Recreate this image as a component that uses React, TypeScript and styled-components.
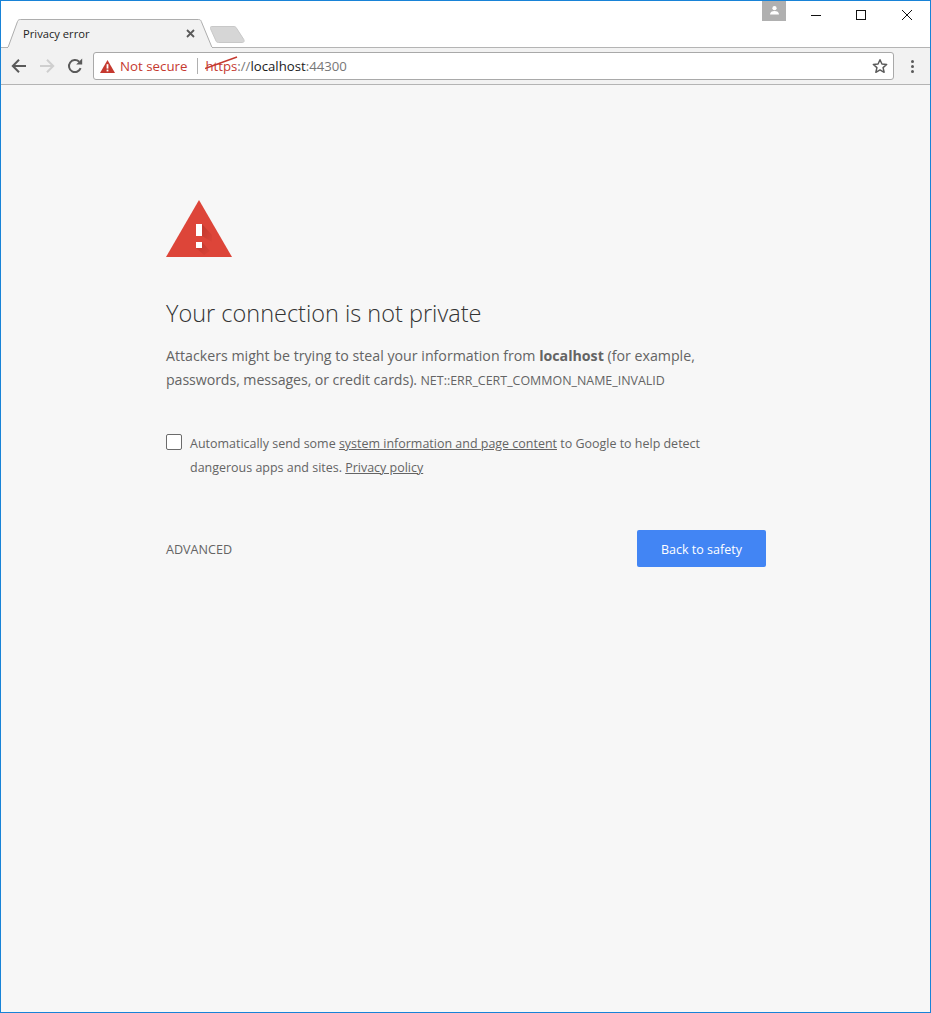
import styled, { createGlobalStyle } from "styled-components";

const GlobalStyle = createGlobalStyle`
  html, body {
    margin: 0;
    padding: 0;
    background: #ffffff;
    font-family: "Open Sans", "Noto Sans", sans-serif;
  }
  * {
    box-sizing: border-box;
  }
`;

const App = () => {
  return (
    <Browser>
      <GlobalStyle />
      <TitleBar>
        <Tab>
          <TabShape viewBox="0 0 206 29" width="206" height="29">
            <path d="M0 28.5 L1 28.5 L10.5 2.5 C11 1 12 0.5 13.5 0.5 L191.5 0.5 C193 0.5 193.8 1 194.3 2.5 L205 28.5 L206 28.5 L206 29 L0 29 Z" fill="#f2f2f2" stroke="#adadad" strokeWidth="1" />
            <rect x="1" y="28" width="204" height="1" fill="#f2f2f2" />
          </TabShape>
          <TabTitle>Privacy error</TabTitle>
          <TabClose width="9" height="9" viewBox="0 0 9 9">
            <path d="M1 1 L8 8 M8 1 L1 8" stroke="#5a5a5a" strokeWidth="1.8" fill="none" />
          </TabClose>
        </Tab>
        <NewTab width="35" height="17" viewBox="0 0 35 17">
          <path d="M1.5 0.5 L24 0.5 C25.2 0.5 25.8 1 26.4 2 L33.8 13.5 C34.6 15 34 16.5 32.4 16.5 L8.5 16.5 C7.2 16.5 6.5 16 6 15 L0.4 2.5 C0 1.4 0.4 0.5 1.5 0.5 Z" fill="#d6d6d6" stroke="#c8c8c8" strokeWidth="1" />
        </NewTab>
        <WindowControls>
          <Avatar>
            <svg width="9" height="9" viewBox="0 0 9 9">
              <circle cx="4.5" cy="2.2" r="2.1" fill="#ffffff" />
              <path d="M0 8.5 C0 6 2 5 4.5 5 C7 5 9 6 9 8.5 Z" fill="#ffffff" />
            </svg>
          </Avatar>
          <ControlButton>
            <svg width="10" height="10" viewBox="0 0 10 10">
              <path d="M0 5.5 H10" stroke="#111111" strokeWidth="1" />
            </svg>
          </ControlButton>
          <ControlButton>
            <svg width="10" height="10" viewBox="0 0 10 10">
              <rect x="0.5" y="0.5" width="9" height="9" fill="none" stroke="#111111" strokeWidth="1" />
            </svg>
          </ControlButton>
          <ControlButton>
            <svg width="10" height="10" viewBox="0 0 10 10">
              <path d="M0 0 L10 10 M10 0 L0 10" stroke="#111111" strokeWidth="1" />
            </svg>
          </ControlButton>
        </WindowControls>
      </TitleBar>
      <Toolbar>
        <NavIcon width="16" height="16" viewBox="0 0 16 16">
          <path d="M15 8 H2 M8 1.8 L1.8 8 L8 14.2" stroke="#5a5a5a" strokeWidth="2" fill="none" />
        </NavIcon>
        <NavIcon width="16" height="16" viewBox="0 0 16 16">
          <path d="M1 8 H14 M8 1.8 L14.2 8 L8 14.2" stroke="#cfcfcf" strokeWidth="2" fill="none" />
        </NavIcon>
        <NavIcon width="16" height="16" viewBox="0 0 16 16">
          <path d="M13.6 10.2 A6 6 0 1 1 12.2 3.8" stroke="#5a5a5a" strokeWidth="2" fill="none" />
          <path d="M9.2 6.6 L15.2 6.6 L15.2 0.6 Z" fill="#5a5a5a" />
        </NavIcon>
        <Omnibox>
          <svg width="15" height="13" viewBox="0 0 15 13">
            <path d="M7.5 0 L15 13 L0 13 Z" fill="#c5392f" />
            <rect x="6.6" y="4.2" width="1.8" height="4.4" fill="#ffffff" />
            <rect x="6.6" y="9.6" width="1.8" height="1.8" fill="#ffffff" />
          </svg>
          <SecurityLabel>Not secure</SecurityLabel>
          <Divider />
          <UrlText>
            <Scheme>
              https
              <StrikeLine width="34" height="16" viewBox="0 0 34 16">
                <path d="M0 13.5 L32 2" stroke="#c5392f" strokeWidth="1.5" fill="none" />
              </StrikeLine>
            </Scheme>
            <Muted>://</Muted>
            localhost
            <Muted>:44300</Muted>
          </UrlText>
          <Star width="16" height="16" viewBox="0 0 24 24">
            <path d="M12 2.6 L14.9 9.1 L22 9.8 L16.6 14.5 L18.2 21.4 L12 17.8 L5.8 21.4 L7.4 14.5 L2 9.8 L9.1 9.1 Z" fill="none" stroke="#5a5a5a" strokeWidth="2.2" strokeLinejoin="round" />
          </Star>
        </Omnibox>
        <MenuDots>
          <Dot />
          <Dot />
          <Dot />
        </MenuDots>
      </Toolbar>
      <Content>
        <Interstitial>
          <WarningIcon width="66" height="57" viewBox="0 0 66 57">
            <defs>
              <linearGradient id="fold" x1="0" y1="0" x2="1" y2="1">
                <stop offset="0" stopColor="#a32a22" stopOpacity="0.5" />
                <stop offset="1" stopColor="#a32a22" stopOpacity="0.05" />
              </linearGradient>
            </defs>
            <path d="M33 0 L66 57 L0 57 Z" fill="#dd4539" />
            <path d="M36 24 L46 35 L46 42 L36 36 Z" fill="url(#fold)" />
            <path d="M36 42 L44 51 L38 55 L30 48 Z" fill="url(#fold)" />
            <rect x="30" y="24" width="6" height="12" fill="#ffffff" />
            <rect x="30" y="42" width="6" height="6" fill="#ffffff" />
          </WarningIcon>
          <Heading>Your connection is not private</Heading>
          <Message>
            Attackers might be trying to steal your information from <strong>localhost</strong> (for example,{" "}
            <Tight>passwords, messages, or credit cards). </Tight>
            <ErrorCode>NET::ERR_CERT_COMMON_NAME_INVALID</ErrorCode>
          </Message>
          <OptIn>
            <Checkbox />
            <OptInText>
              Automatically send some <Link>system information and page content</Link> to Google to help detect
              dangerous apps and sites. <Link>Privacy policy</Link>
            </OptInText>
          </OptIn>
          <Actions>
            <AdvancedButton>ADVANCED</AdvancedButton>
            <PrimaryButton>Back to safety</PrimaryButton>
          </Actions>
        </Interstitial>
      </Content>
    </Browser>
  );
};

export default App;

const Browser = styled.div`
  width: 931px;
  height: 1013px;
  border: 1px solid #1883d7;
  display: flex;
  flex-direction: column;
  overflow: hidden;
  background: #f7f7f7;
`;

const TitleBar = styled.header`
  height: 46px;
  flex: none;
  background: #ffffff;
  display: flex;
  align-items: flex-end;
  padding-left: 6px;
`;

const Tab = styled.div`
  position: relative;
  width: 206px;
  height: 29px;
  display: flex;
  align-items: center;
  justify-content: space-between;
  padding: 0 18px 0 16px;
  z-index: 1;
  margin-bottom: -1px;
`;

const TabShape = styled.svg`
  position: absolute;
  left: 0;
  top: 0;
`;

const TabTitle = styled.span`
  position: relative;
  font-size: 11.2px;
  color: #222222;
`;

const TabClose = styled.svg`
  position: relative;
`;

const NewTab = styled.svg`
  margin-left: -3px;
  margin-bottom: 4px;
`;

const WindowControls = styled.div`
  margin-left: auto;
  align-self: flex-start;
  display: flex;
`;

const Avatar = styled.div`
  width: 24px;
  height: 20px;
  margin-right: 8px;
  background: #b0b0b0;
  display: flex;
  align-items: center;
  justify-content: center;
  padding-bottom: 2px;
`;

const ControlButton = styled.div`
  width: 45px;
  height: 28px;
  display: flex;
  align-items: center;
  padding-left: 17px;

  &:last-child {
    width: 46px;
    padding-left: 18px;
  }
`;

const Toolbar = styled.div`
  height: 38px;
  flex: none;
  background: #f2f2f2;
  border-top: 1px solid #b4b4b4;
  border-bottom: 1px solid #b4b4b4;
  display: flex;
  align-items: center;
  padding: 0 11px 0 10px;
  gap: 12px;
`;

const NavIcon = styled.svg`
  flex: none;
`;

const Omnibox = styled.div`
  flex: 1;
  height: 28px;
  margin-left: -2px;
  margin-right: 1px;
  background: #ffffff;
  border: 1px solid #a9a9a9;
  border-radius: 3px;
  display: flex;
  align-items: center;
  padding: 0 5px 0 6px;
`;

const SecurityLabel = styled.span`
  margin-left: 5px;
  color: #c5392f;
  font-size: 13.3px;
`;

const Divider = styled.span`
  width: 1px;
  height: 16px;
  background: #b0b0b0;
  margin: 0 7px 0 10px;
`;

const UrlText = styled.span`
  color: #1a1a1a;
  font-size: 13.2px;
  flex: 1;
`;

const Scheme = styled.span`
  position: relative;
  color: #c5392f;
`;

const StrikeLine = styled.svg`
  position: absolute;
  left: 0;
  top: -2px;
`;

const Muted = styled.span`
  color: #777777;
`;

const Star = styled.svg`
  flex: none;
`;

const MenuDots = styled.div`
  width: 14px;
  display: flex;
  flex-direction: column;
  align-items: center;
  gap: 2px;
  margin-left: -2px;
`;

const Dot = styled.span`
  width: 3px;
  height: 3px;
  border-radius: 50%;
  background: #5a5a5a;
`;

const Content = styled.main`
  flex: 1;
  background: #f7f7f7;
  padding: 115px 0 0 165px;
`;

const Interstitial = styled.div`
  width: 600px;
  color: #646464;
`;

const WarningIcon = styled.svg`
  display: block;
`;

const Heading = styled.h1`
  margin: 39px 0 0;
  font-size: 23.5px;
  font-weight: 300;
  line-height: 34px;
  color: #333333;
`;

const Message = styled.p`
  margin: 14px 0 0;
  width: 560px;
  font-size: 14.2px;
  line-height: 24px;

  strong {
    font-weight: 700;
  }
`;

const Tight = styled.span`
  letter-spacing: -0.08px;
`;

const ErrorCode = styled.span`
  font-size: 12.45px;
`;

const OptIn = styled.div`
  margin-top: 39px;
  display: flex;
  align-items: flex-start;
`;

const Checkbox = styled.span`
  width: 16px;
  height: 16px;
  flex: none;
  margin-top: 2px;
  border: 1px solid #6b6b6b;
  border-radius: 2px;
  background: #ffffff;
`;

const OptInText = styled.p`
  margin: 0 0 0 8px;
  width: 530px;
  font-size: 12.48px;
  line-height: 24px;
`;

const Link = styled.span`
  text-decoration: underline;
`;

const Actions = styled.div`
  margin-top: 50px;
  display: flex;
  align-items: center;
  justify-content: space-between;
`;

const AdvancedButton = styled.span`
  padding-top: 2px;
  font-size: 12.6px;
  color: #646464;
`;

const PrimaryButton = styled.div`
  width: 129px;
  height: 37px;
  padding-top: 2px;
  background: #4285f4;
  border-radius: 2px;
  color: #ffffff;
  font-size: 12.5px;
  display: flex;
  align-items: center;
  justify-content: center;
`;
